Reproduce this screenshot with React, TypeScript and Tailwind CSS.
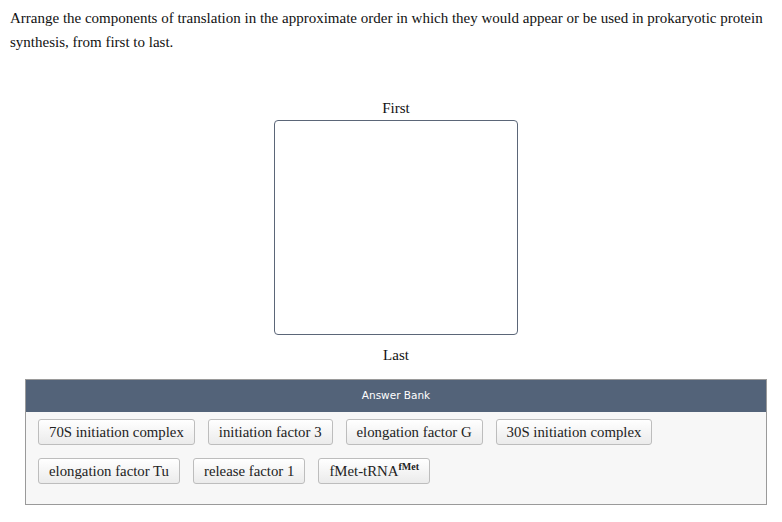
import React from "react";

const serif = { fontFamily: '"Liberation Serif", "Times New Roman", serif' };

function Chip({ children }: { children: React.ReactNode }) {
  return (
    <div className="h-[26px] px-[10px] flex items-center rounded-[3px] border border-[#bdbdbd] bg-gradient-to-b from-[#ffffff] to-[#ebebeb] text-[14.8px] text-[#222] whitespace-nowrap">
      {children}
    </div>
  );
}

export default function App() {
  return (
    <div className="w-[782px] h-[522px] bg-white text-[#111]" style={serif}>
      <p className="pl-[10px] pr-[4px] pt-[6px] text-[15px] leading-[24px]">
        Arrange the components of translation in the approximate order in which they would appear or be used in prokaryotic protein synthesis, from first to last.
      </p>
      <div className="ml-[25px] w-[742px] flex flex-col items-center">
        <div className="mt-[44px] text-[15px] leading-[20px] h-[20px]">First</div>
        <div className="mt-[2px] w-[244px] h-[215px] border border-[#5b6678] rounded-[4px]" />
        <div className="mt-[10px] text-[15px] leading-[20px] h-[20px]">Last</div>
      </div>
      <div className="ml-[25px] mt-[14px] w-[742px] border border-[#9a9a9a] bg-[#f7f7f7]">
        <div
          className="h-[32px] bg-[#536379] text-white flex items-center justify-center"
          style={{ fontFamily: '"DejaVu Sans", Verdana, sans-serif', fontSize: "10.5px" }}
        >
          Answer Bank
        </div>
        <div className="px-[12px] pt-[7px] pb-[20px] flex flex-col gap-[13px]">
          <div className="flex gap-[13px]">
            <Chip>70S initiation complex</Chip>
            <Chip>initiation factor 3</Chip>
            <Chip>elongation factor G</Chip>
            <Chip>30S initiation complex</Chip>
          </div>
          <div className="flex gap-[13px]">
            <Chip>elongation factor Tu</Chip>
            <Chip>release factor 1</Chip>
            <Chip>
              fMet-tRNA<sup className="text-[10px] font-bold relative -top-[4px]">fMet</sup>
            </Chip>
          </div>
        </div>
      </div>
    </div>
  );
}
